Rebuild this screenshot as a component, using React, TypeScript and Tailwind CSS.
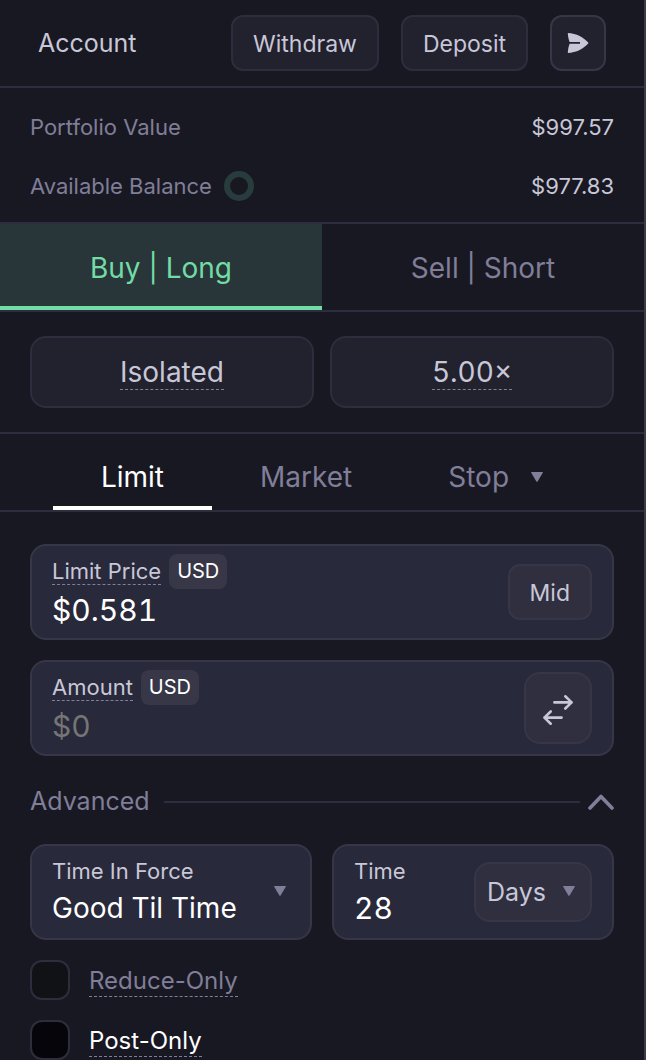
import { useState } from "react";
import type { ReactNode } from "react";

const Caret = ({ className = "" }: { className?: string }) => (
  <svg viewBox="0 0 12 10" className={`h-2.5 w-3 fill-[#807e98] ${className}`} aria-hidden="true">
    <path d="M0.6 0h10.8q0.8 0 0.4 0.8L6.6 9.4q-0.6 0.9-1.2 0L0.2 0.8Q-0.2 0 0.6 0z" />
  </svg>
);

const SendIcon = () => (
  <svg viewBox="0 0 22 20" className="h-5 w-[22px] fill-[#c8c7d8]" aria-hidden="true">
    <path d="M0.8 0C9.4 0.4 17 4.4 21.6 10C17 15.6 9.4 19.6 0.8 20C0.9 17 1.5 13.8 2.6 10.8H13V9H2.6C1.5 6.2 0.9 3 0.8 0z" />
  </svg>
);

const SwapIcon = () => (
  <svg
    viewBox="0 0 30 30"
    className="size-[30px] fill-none stroke-[#c8c7d8] stroke-[2.6]"
    strokeLinecap="round"
    strokeLinejoin="round"
    aria-hidden="true"
  >
    <path d="M11.4 7.4H28.6M22.3 1.3L28.6 7.4L22.3 13.5" />
    <path d="M18.6 22.6H1.4M7.7 16.5L1.4 22.6L7.7 28.7" />
  </svg>
);

const ChevronUp = () => (
  <svg
    viewBox="0 0 26 16"
    className="h-4 w-[26px] fill-none stroke-[#807e98] stroke-[3.6]"
    strokeLinecap="round"
    strokeLinejoin="round"
    aria-hidden="true"
  >
    <path d="M2 14L13 2.4L24 14" />
  </svg>
);

const Badge = ({ children }: { children: ReactNode }) => (
  <span className="rounded-lg bg-[#373748] px-2 text-[20px] leading-[35px] text-white">{children}</span>
);

interface FieldProps {
  id: string;
  label: string;
  value?: string;
  placeholder?: string;
  children: ReactNode;
}

const MoneyField = ({ id, label, value, placeholder, children }: FieldProps) => (
  <div className="flex h-24 items-center gap-4 rounded-2xl border-2 border-[#363647] bg-[#28293a] px-5">
    <div className="min-w-0 flex-1 pt-0.5">
      <div className="flex items-center gap-2">
        <label htmlFor={id} className="border-b border-dashed border-[#807e98] text-[22px] leading-[26px] text-[#c8c7d8]">
          {label}
        </label>
        <Badge>USD</Badge>
      </div>
      <input
        id={id}
        defaultValue={value}
        placeholder={placeholder}
        className="block h-11 w-full bg-transparent text-[30px] tabular-nums text-white outline-none placeholder:text-[#757575]"
      />
    </div>
    {children}
  </div>
);

interface CheckProps {
  id: string;
  label: string;
  disabled?: boolean;
}

const CheckRow = ({ id, label, disabled }: CheckProps) => (
  <div className="flex h-10 items-center gap-[19px]">
    <input
      id={id}
      type="checkbox"
      disabled={disabled}
      className="size-10 appearance-none rounded-xl border-2 border-[#2d2d3d] bg-[#06060a] checked:bg-[#7774ff] disabled:bg-[#111216]"
    />
    <label
      htmlFor={id}
      className={`mt-0.5 border-b border-dashed border-[#807e98] text-[24px] leading-[30px] ${disabled ? "text-[#807e98]" : "text-white"}`}
    >
      {label}
    </label>
  </div>
);

const orderTypes = ["Limit", "Market", "Stop"];

export default function App() {
  const [side, setSide] = useState("buy");
  const [orderType, setOrderType] = useState("Limit");

  return (
    <main className="min-h-screen border-r-2 border-[#3c3c49] bg-[#181822] font-['Inter',sans-serif] text-[#c8c7d8]">
      {/* Header */}
      <header className="flex h-[88px] items-center gap-[22px] border-b-2 border-[#2d2d3d] px-[38px]">
        <h1 className="flex-1 pt-0.5 text-[25px]">Account</h1>
        <button className="h-14 rounded-xl border-2 border-[#2d2d3d] bg-[#22212e] px-5 pt-0.5 text-[23px]">Withdraw</button>
        <button className="h-14 rounded-xl border-2 border-[#2d2d3d] bg-[#22212e] px-5 pt-0.5 text-[23px]">Deposit</button>
        <button
          aria-label="Transfer"
          className="flex size-14 items-center justify-center rounded-xl border-2 border-[#363647] bg-[#22212e]"
        >
          <SendIcon />
        </button>
      </header>

      {/* Balances */}
      <dl className="border-b-2 border-[#2d2d3d] px-[30px] pt-2 pb-1.5 text-[22px]">
        <div className="flex h-15 items-center justify-between">
          <dt className="pt-0.5 text-[#807e98]">Portfolio Value</dt>
          <dd className="pt-0.5">$997.57</dd>
        </div>
        <div className="flex h-15 items-center justify-between">
          <dt className="flex items-center gap-3 text-[#807e98]">
            Available Balance
            <span className="size-[30px] rounded-full border-[6px] border-[#283c3e]" />
          </dt>
          <dd>$977.83</dd>
        </div>
      </dl>

      {/* Side */}
      <div className="grid h-[88px] grid-cols-2 border-b-2 border-[#2d2d3d] text-[28px]">
        <button
          onClick={() => setSide("buy")}
          className={`border-b-4 pt-1.5 ${
            side === "buy" ? "border-[#73dba5] bg-[#283639] text-[#73dba5]" : "border-transparent text-[#807e98]"
          }`}
        >
          Buy | Long
        </button>
        <button
          onClick={() => setSide("sell")}
          className={`border-b-4 pt-1.5 ${
            side === "sell" ? "border-[#e45555] bg-[#38242e] text-[#e45555]" : "border-transparent text-[#807e98]"
          }`}
        >
          Sell | Short
        </button>
      </div>

      {/* Margin mode and leverage */}
      <div className="grid grid-cols-2 gap-4 border-b-2 border-[#2d2d3d] px-[30px] py-6 text-[28px]">
        <button className="h-18 rounded-2xl border-2 border-[#2d2d3d] bg-[#22212e]">
          <span className="inline-block border-b border-dashed border-[#807e98] leading-[34px]">Isolated</span>
        </button>
        <button className="h-18 rounded-2xl border-2 border-[#2d2d3d] bg-[#22212e]">
          <span className="inline-block border-b border-dashed border-[#807e98] leading-[34px] tabular-nums">5.00×</span>
        </button>
      </div>

      {/* Order type */}
      <nav className="flex h-[78px] justify-center border-b-2 border-[#2d2d3d] text-[28px]">
        {orderTypes.map((type) => (
          <button
            key={type}
            onClick={() => setOrderType(type)}
            className={`flex items-center border-b-4 px-12 pt-3.5 ${
              orderType === type ? "border-white text-white" : "border-transparent text-[#807e98]"
            }`}
          >
            {type}
            {type === "Stop" && <Caret className="ml-[22px]" />}
          </button>
        ))}
      </nav>

      <form className="flex flex-col gap-5 px-[30px] pt-8">
        <MoneyField id="limit-price" label="Limit Price" value="$0.581">
          <button type="button" className="h-14 rounded-xl border-2 border-[#363647] bg-[#2f2f40] px-5 pt-0.5 text-[23px]">
            Mid
          </button>
        </MoneyField>

        <MoneyField id="amount" label="Amount" placeholder="$0">
          <button
            type="button"
            aria-label="Switch currency"
            className="flex h-18 items-center rounded-2xl border-2 border-[#363647] bg-[#2f2f40] px-[17px] pt-1"
          >
            <SwapIcon />
          </button>
        </MoneyField>

        <button type="button" className="flex h-12 items-center pt-1 text-[25px] text-[#807e98]">
          Advanced
          <span className="mr-2 ml-3.5 h-0.5 flex-1 bg-[#2d2d3d]" />
          <ChevronUp />
        </button>

        <div className="grid grid-cols-2 gap-5">
          <div className="relative h-24 rounded-2xl border-2 border-[#363647] bg-[#28293a] px-5 pt-2.5">
            <label htmlFor="tif" className="block text-[22px] leading-[30px]">
              Time In Force
            </label>
            <select id="tif" className="block h-11 w-full appearance-none bg-transparent text-[28px] text-white outline-none">
              <option>Good Til Time</option>
              <option>Immediate Or Cancel</option>
            </select>
            <Caret className="pointer-events-none absolute top-10 right-6" />
          </div>

          <div className="flex h-24 items-center rounded-2xl border-2 border-[#363647] bg-[#28293a] px-5">
            <div className="min-w-0 flex-1 self-start pt-2.5">
              <label htmlFor="time" className="block text-[22px] leading-[30px]">
                Time
              </label>
              <input
                id="time"
                defaultValue="28"
                className="block h-11 w-full bg-transparent text-[30px] tabular-nums text-white outline-none"
              />
            </div>
            <div className="relative">
              <select
                aria-label="Time unit"
                className="h-15 w-[118px] appearance-none rounded-2xl border-2 border-[#363647] bg-[#2f2f40] pt-0.5 pl-[11px] text-[25px] outline-none"
              >
                <option>Days</option>
                <option>Weeks</option>
              </select>
              <Caret className="pointer-events-none absolute top-6 right-[17px]" />
            </div>
          </div>
        </div>

        <CheckRow id="reduce-only" label="Reduce-Only" disabled />
        <CheckRow id="post-only" label="Post-Only" />
      </form>
    </main>
  );
}
